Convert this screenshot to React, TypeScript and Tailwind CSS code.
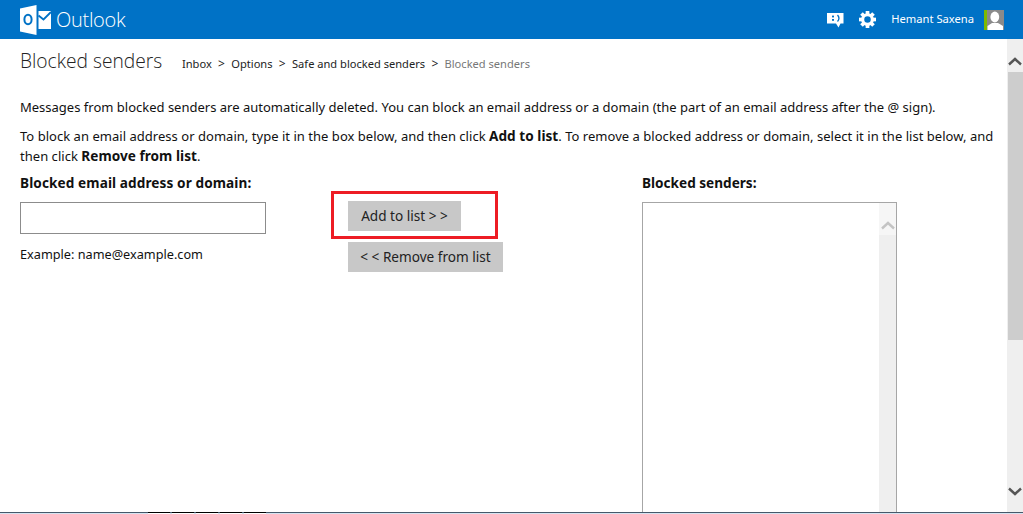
import React from 'react'

const font = { fontFamily: '"Noto Sans", "Open Sans", sans-serif' }

const OutlookLogo = () => (
  <svg width="32" height="30" viewBox="0 0 32 30" className="shrink-0">
    <path d="M0 3.5 L16.5 0 V30 L0 26.5 Z" fill="#fff" />
    <ellipse cx="8" cy="14.5" rx="3.6" ry="4.8" fill="none" stroke="#0072c6" strokeWidth="2" />
    <path d="M18.5 6 H31 V24 H18.5 Z" fill="#fff" />
    <path d="M18.5 10.5 L23.5 14.5 L31 7" fill="none" stroke="#0072c6" strokeWidth="1.8" />
  </svg>
)

const Crumb = ({ children, muted }: { children: React.ReactNode; muted?: boolean }) => (
  <span className={muted ? 'text-[#777]' : 'text-[#222]'}>{children}</span>
)

const Sep = () => <span className="mx-[6.3px] text-[12px] text-[#222]">&gt;</span>

const Chevron = ({ down, color }: { down?: boolean; color: string }) => (
  <svg width="14" height="9" viewBox="0 0 14 9">
    <path d={down ? 'M1 1.5 L7 7 L13 1.5' : 'M1 7.5 L7 2 L13 7.5'} fill="none" stroke={color} strokeWidth="2.4" />
  </svg>
)

const Gear = () => (
  <svg width="17" height="17" viewBox="-12 -12 24 24" className="ml-[15px]">
    <circle r="6.8" fill="none" stroke="#fff" strokeWidth="4.4" />
    {[0, 45, 90, 135, 180, 225, 270, 315].map(a => (
      <rect key={a} x="-2.6" y="-12" width="5.2" height="5" fill="#fff" transform={`rotate(${a})`} />
    ))}
  </svg>
)

export default function App() {
  return (
    <div className="h-[514px] w-[1023px] overflow-hidden bg-white flex flex-col text-[13px] text-[#111]" style={font}>
      <header className="h-[39px] shrink-0 bg-[#0072c6] flex items-center pl-[20px] pr-[19px] text-white">
        <OutlookLogo />
        <span className="ml-[4px] text-[20px] font-light tracking-[-0.3px]" style={{ fontFamily: '"Open Sans", sans-serif' }}>Outlook</span>
        <div className="ml-auto flex items-center">
          <svg width="17" height="15" viewBox="0 0 17 15" className="mt-[2px]">
            <path d="M0 0 H16.5 V10.5 H13.5 L11.5 14.5 L9 10.5 H0 Z" fill="#fff" />
            <rect x="5" y="2.6" width="2" height="1.8" fill="#0072c6" />
            <rect x="5" y="6" width="2" height="1.8" fill="#0072c6" />
            <path d="M10.5 2 C12.3 4 12.3 6.5 10.5 8.5" fill="none" stroke="#0072c6" strokeWidth="1.3" />
          </svg>
          <Gear />
          <span className="ml-[15px] text-[11.2px]">Hemant Saxena</span>
          <div className="ml-[10px] h-[20px] w-[20px] flex bg-[#8a8a8a] overflow-hidden">
            <div className="w-[3px] bg-[#7fba00]" />
            <svg width="17" height="20" viewBox="0 0 17 20">
              <ellipse cx="7.8" cy="7" rx="4.4" ry="5.4" fill="#fff" />
              <path d="M0.5 20 V16 L5 13 H11 L16 16 V20 Z" fill="#fff" />
            </svg>
          </div>
        </div>
      </header>

      <div className="flex-1 min-h-0 flex">
        <main className="flex-1 min-w-0 pl-[20px] pr-[8px] overflow-hidden">
          <div className="flex items-baseline pt-[8px]">
            <h1 className="text-[19.2px] leading-[28px] font-light text-[#222] w-[162px] whitespace-nowrap" style={{ fontFamily: '"Open Sans", sans-serif' }}>Blocked senders</h1>
            <nav className="text-[11.1px] whitespace-nowrap">
              <Crumb>Inbox</Crumb><Sep /><Crumb>Options</Crumb><Sep /><Crumb>Safe and blocked senders</Crumb><Sep /><Crumb muted>Blocked senders</Crumb>
            </nav>
          </div>

          <p className="mt-[23px] leading-[18px] whitespace-nowrap">
            Messages from blocked senders are automatically deleted. You can block an email address or a domain (the part of an email address after the @ sign).
          </p>
          <p className="mt-[10px] leading-[19px] tracking-[0.03px]">
            To block an email address or domain, type it in the box below, and then click <b className="text-[13.6px]">Add to list</b>. To remove a blocked address or domain, select it in the list below, and then click <b className="text-[13.6px]">Remove from list</b>.
          </p>

          <div className="mt-[8px] flex items-start">
            <div className="w-[311px] shrink-0">
              <div className="font-bold leading-[18px] text-[13.6px] tracking-[0.1px] whitespace-nowrap">Blocked email address or domain:</div>
              <input className="mt-[10px] block h-[32px] w-[246px] border border-[#8c8c8c] outline-none" />
              <div className="mt-[11px] leading-[18px] text-[12.7px]">Example: name@example.com</div>
            </div>
            <div className="w-[311px] shrink-0 pt-[17px]">
              <div className="w-[167px] h-[48px] border-[3px] border-[#ed1c24] pl-[14px] pt-[7px]">
                <button className="h-[30px] w-[113px] bg-[#c8c8c8] text-[13.6px] text-[#222]">Add to list &gt; &gt;</button>
              </div>
              <button className="mt-[3px] ml-[17px] block h-[30px] w-[155px] bg-[#c8c8c8] text-[13.6px] text-[#222]">&lt; &lt; Remove from list</button>
            </div>
            <div>
              <div className="font-bold leading-[18px] text-[13.6px] whitespace-nowrap">Blocked senders:</div>
              <div className="mt-[10px] h-[400px] w-[255px] border border-[#a6a6a6] flex justify-end">
                <div className="w-[17px] h-full bg-[#efefef]">
                  <div className="h-[32px] bg-[#f6f6f6] flex items-center justify-center pt-[12px]">
                    <Chevron color="#c4c4c4" />
                  </div>
                </div>
              </div>
            </div>
          </div>
        </main>

        <aside className="w-[16px] shrink-0 bg-[#efefef] flex flex-col">
          <div className="h-[33px] flex items-center justify-center pt-[12px]">
            <Chevron color="#555" />
          </div>
          <div className="h-[268px] ml-[1px] bg-[#cdcdcd]" />
          <div className="mt-auto h-[28px] flex items-center justify-center pb-[14px]">
            <Chevron down color="#555" />
          </div>
        </aside>
      </div>

      <footer className="h-[2px] shrink-0 border-t border-[#46586a] bg-[#d6e4f1] flex pl-[148px] gap-[2px]">
        {[0, 1, 2, 3, 4].map(i => (
          <div key={i} className="w-[22px] h-[2px] -mt-[1px] bg-white border-t border-black" />
        ))}
      </footer>
    </div>
  )
}
